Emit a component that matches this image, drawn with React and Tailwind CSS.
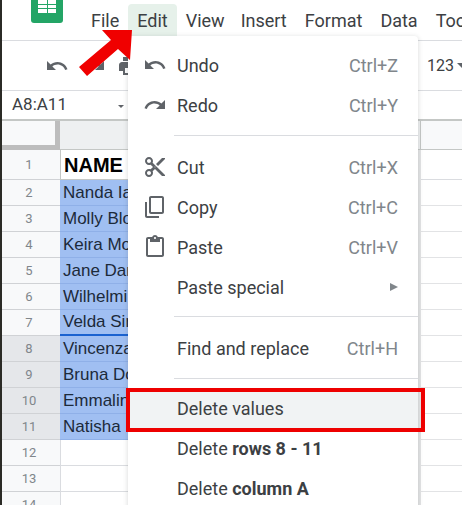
import React from 'react'

const font = { fontFamily: 'Roboto, sans-serif' }

const paths = {
  undo: 'M12.5 8c-2.65 0-5.05.99-6.9 2.6L2 7v9h9l-3.62-3.62c1.39-1.16 3.16-1.88 5.12-1.88 3.54 0 6.55 2.31 7.6 5.5l2.37-.78C21.08 11.03 17.15 8 12.5 8z',
  redo: 'M18.4 10.6C16.55 8.99 14.15 8 11.5 8c-4.65 0-8.58 3.03-9.96 7.22L3.9 16c1.05-3.19 4.05-5.5 7.6-5.5 1.95 0 3.73.72 5.12 1.88L13 16h9V7l-3.6 3.6z',
  cut: 'M9.64 7.64c.23-.5.36-1.05.36-1.64 0-2.21-1.79-4-4-4S2 3.79 2 6s1.79 4 4 4c.59 0 1.14-.13 1.64-.36L10 12l-2.36 2.36C7.14 14.13 6.59 14 6 14c-2.21 0-4 1.79-4 4s1.79 4 4 4 4-1.79 4-4c0-.59-.13-1.14-.36-1.64L12 14l7 7h3v-1L9.64 7.64zM6 8c-1.1 0-2-.89-2-2s.9-2 2-2 2 .89 2 2-.9 2-2 2zm0 12c-1.1 0-2-.89-2-2s.9-2 2-2 2 .89 2 2-.9 2-2 2zm6-7.5c-.28 0-.5-.22-.5-.5s.22-.5.5-.5.5.22.5.5-.22.5-.5.5zM19 3l-6 6 2 2 7-7V3z',
  copy: 'M16 1H4c-1.1 0-2 .9-2 2v14h2V3h12V1zm3 4H8c-1.1 0-2 .9-2 2v14c0 1.1.9 2 2 2h11c1.1 0 2-.9 2-2V7c0-1.1-.9-2-2-2zm0 16H8V7h11v14z',
  paste: 'M19 2h-4.18C14.4.84 13.3 0 12 0c-1.3 0-2.4.84-2.82 2H5c-1.1 0-2 .9-2 2v16c0 1.1.9 2 2 2h14c1.1 0 2-.9 2-2V4c0-1.1-.9-2-2-2zm-7 0c.55 0 1 .45 1 1s-.45 1-1 1-1-.45-1-1 .45-1 1-1zm7 18H5V4h2v3h10V4h2v16z',
  print: 'M19 8H5c-1.66 0-3 1.34-3 3v6h4v4h12v-4h4v-6c0-1.66-1.34-3-3-3zm-3 11H8v-5h8v5zm3-7c-.55 0-1-.45-1-1s.45-1 1-1 1 .45 1 1-.45 1-1 1zm-1-9H6v4h12V3z',
}

const Icon = ({ name, className = '' }) => (
  <svg viewBox="0 0 24 24" className={`w-6 h-6 shrink-0 fill-[#5f6368] ${className}`}>
    <path d={paths[name]} />
  </svg>
)

const names = ['Nanda Ia', 'Molly Blo', 'Keira Mo', 'Jane Dar', 'Wilhelmi', 'Velda Sir', 'Vincenza', 'Bruna Do', 'Emmalin', 'Natisha']

const MenuItem = ({ icon, flip, label, shortcut, arrow, active }) => (
  <div className={`h-10 flex items-center text-[18px] text-[#3c4043] ${active ? 'bg-[#f1f3f4]' : ''}`}>
    <div className="w-[49px] pl-[15px] shrink-0">
      {icon && <Icon name={icon} className={flip ? '-scale-y-100' : ''} />}
    </div>
    <div className="flex-1 whitespace-nowrap">{label}</div>
    {shortcut && <div className="pr-[20px] text-[#80868b]">{shortcut}</div>}
    {arrow && <div className="mr-[20px] w-0 h-0 border-y-[4px] border-y-transparent border-l-[8px] border-l-[#80868b]" />}
  </div>
)

const Sep = ({ top, bottom }) => (
  <div className={`ml-[46px] border-t border-[#dadce0] ${top} ${bottom}`} />
)

export default function App() {
  return (
    <div className="relative w-[462px] h-[505px] overflow-hidden bg-white flex" style={font}>
      <div className="w-[2px] shrink-0 bg-[#2b2b26]" />
      <div className="flex-1 min-w-0 flex flex-col">
        {/* Menu bar */}
        <div className="h-[41px] shrink-0 border-b border-[#dadce0] flex text-[18px] text-[#3c4043] whitespace-nowrap overflow-hidden">
          <div className="ml-[29px] w-8 h-[23px] shrink-0 bg-[#23a566] rounded-b-[3px] flex justify-center">
            <div className="w-[18px] h-[13px] grid grid-cols-2 grid-rows-3 gap-[1px]">
              <div className="bg-white" />
              <div className="bg-white" />
              <div className="bg-white" />
              <div className="bg-white" />
              <div className="bg-white" />
              <div className="bg-white" />
            </div>
          </div>
          <div className="ml-[28px] mt-[10px] leading-[22px] shrink-0">File</div>
          <div className="ml-[9px] mt-1 h-[32px] px-[9px] pt-[6px] leading-[22px] shrink-0 bg-[#e6f1ea] rounded-t-[4px]">Edit</div>
          <div className="ml-[9px] mt-[10px] leading-[22px] shrink-0">View</div>
          <div className="ml-[16px] mt-[10px] leading-[22px] shrink-0">Insert</div>
          <div className="ml-[18px] mt-[10px] leading-[22px] shrink-0">Format</div>
          <div className="ml-[18px] mt-[10px] leading-[22px] shrink-0">Data</div>
          <div className="ml-[18px] mt-[10px] leading-[22px] shrink-0">Tools</div>
        </div>

        {/* Toolbar */}
        <div className="h-[50px] shrink-0 border-b border-[#dadce0] flex items-center text-[#3c4043]">
          <Icon name="undo" className="ml-[43px]" />
          <Icon name="redo" className="ml-[13px]" />
          <Icon name="print" className="ml-[11px]" />
          <div className="ml-auto flex items-center text-[16px] -mr-[5px]">
            <span>123</span>
            <div className="ml-[3px] w-0 h-0 border-x-[5px] border-x-transparent border-t-[5px] border-t-[#5f6368]" />
          </div>
        </div>

        {/* Name box */}
        <div className="h-[30px] shrink-0 border-b-2 border-[#c4c7c5] flex items-center text-[17px] text-[#3c4043]">
          <span className="ml-[10px]">A8:A11</span>
          <div className="ml-[51px] mt-[3px] w-0 h-0 border-x-[3px] border-x-transparent border-t-[3px] border-t-[#5f6368]" />
        </div>

        {/* Grid */}
        <div className="grid grid-cols-[58px_358px_3px_41px] grid-rows-[29px_30px] auto-rows-[26px]">
          <div className="bg-[#f8f9fa] border-r-[5px] border-b-[5px] border-[#bdbdbd]" />
          <div className="col-span-2 bg-[#eef0f1] border-b border-[#c4c7c5] border-r border-r-[#c4c7c5]" />
          <div className="bg-[#f8f9fa] border-b border-[#c4c7c5]" />

          <div className="bg-[#f8f9fa] border-b border-[#d0d2d5] flex items-center justify-center text-[13px] text-[#80868b] pr-[4px]">1</div>
          <div className="border-b border-l border-[#c4c7c5] flex items-center pl-[3px] text-[20px] font-bold text-black" style={{ fontFamily: '"Liberation Sans", sans-serif' }}>NAME</div>
          <div className="bg-[#e4e5e6]" />
          <div className="border-b border-[#dadce0]" />

          {names.map((name, i) => {
            const sel = i >= 6
            return (
              <React.Fragment key={name}>
                <div className={`border-b border-[#d0d2d5] flex items-center justify-center text-[13px] text-[#80868b] pr-[4px] ${sel ? 'bg-[#e5e7ea]' : 'bg-[#f8f9fa]'}`}>{i + 2}</div>
                <div className={`bg-[#a0bff2] border-b border-[#8fb0e8] flex items-center pl-[3px] text-[17px] text-[#1c2a3a] ${i === 5 ? 'border-b-2 border-b-[#1a62d0]' : ''}`} style={{ fontFamily: '"Liberation Sans", sans-serif' }}>{name}</div>
                <div className="bg-[#e4e5e6]" />
                <div className="border-b border-[#e2e3e5]" />
              </React.Fragment>
            )
          })}
          {[12, 13, 14].map((n) => (
            <React.Fragment key={n}>
              <div className="bg-[#f8f9fa] border-b border-[#d0d2d5] flex items-center justify-center text-[13px] text-[#80868b] pr-[4px]">{n}</div>
              <div className="border-b border-l border-[#dadce0]" />
              <div className="bg-[#e4e5e6]" />
              <div className="border-b border-[#e2e3e5]" />
            </React.Fragment>
          ))}
        </div>
      </div>

      {/* Edit menu */}
      <div className="absolute left-[128px] top-[36px] w-[290px] h-[480px] pt-[9px] bg-white rounded-[4px] shadow-[0_1px_4px_1px_rgba(60,64,67,0.15)] text-[#3c4043]">
        <MenuItem icon="undo" label="Undo" shortcut="Ctrl+Z" />
        <MenuItem icon="redo" label="Redo" shortcut="Ctrl+Y" />
        <Sep top="mt-[10px]" bottom="mb-[11px]" />
        <MenuItem icon="cut" label="Cut" shortcut="Ctrl+X" />
        <MenuItem icon="copy" flip label="Copy" shortcut="Ctrl+C" />
        <MenuItem icon="paste" label="Paste" shortcut="Ctrl+V" />
        <MenuItem label="Paste special" arrow />
        <Sep top="mt-[9px]" bottom="mb-[11px]" />
        <MenuItem label="Find and replace" shortcut="Ctrl+H" />
        <Sep top="mt-[10px]" bottom="mb-[9px]" />
        <MenuItem label="Delete values" active />
        <MenuItem label={<>Delete <b className="font-bold">rows 8 - 11</b></>} />
        <MenuItem label={<>Delete <b className="font-bold">column A</b></>} />
      </div>

      {/* Red annotation box */}
      <div className="absolute left-[126px] top-[388px] w-[299px] h-[44px] border-[4px] border-[#ee0000]" />

      {/* Red arrow */}
      <svg className="absolute left-0 top-0 w-[462px] h-[100px] pointer-events-none" viewBox="0 0 462 100">
        <polygon points="102,30 132,30 130,60 118,49 87,76 79,67 111,40" fill="#f00000" />
      </svg>
    </div>
  )
}
